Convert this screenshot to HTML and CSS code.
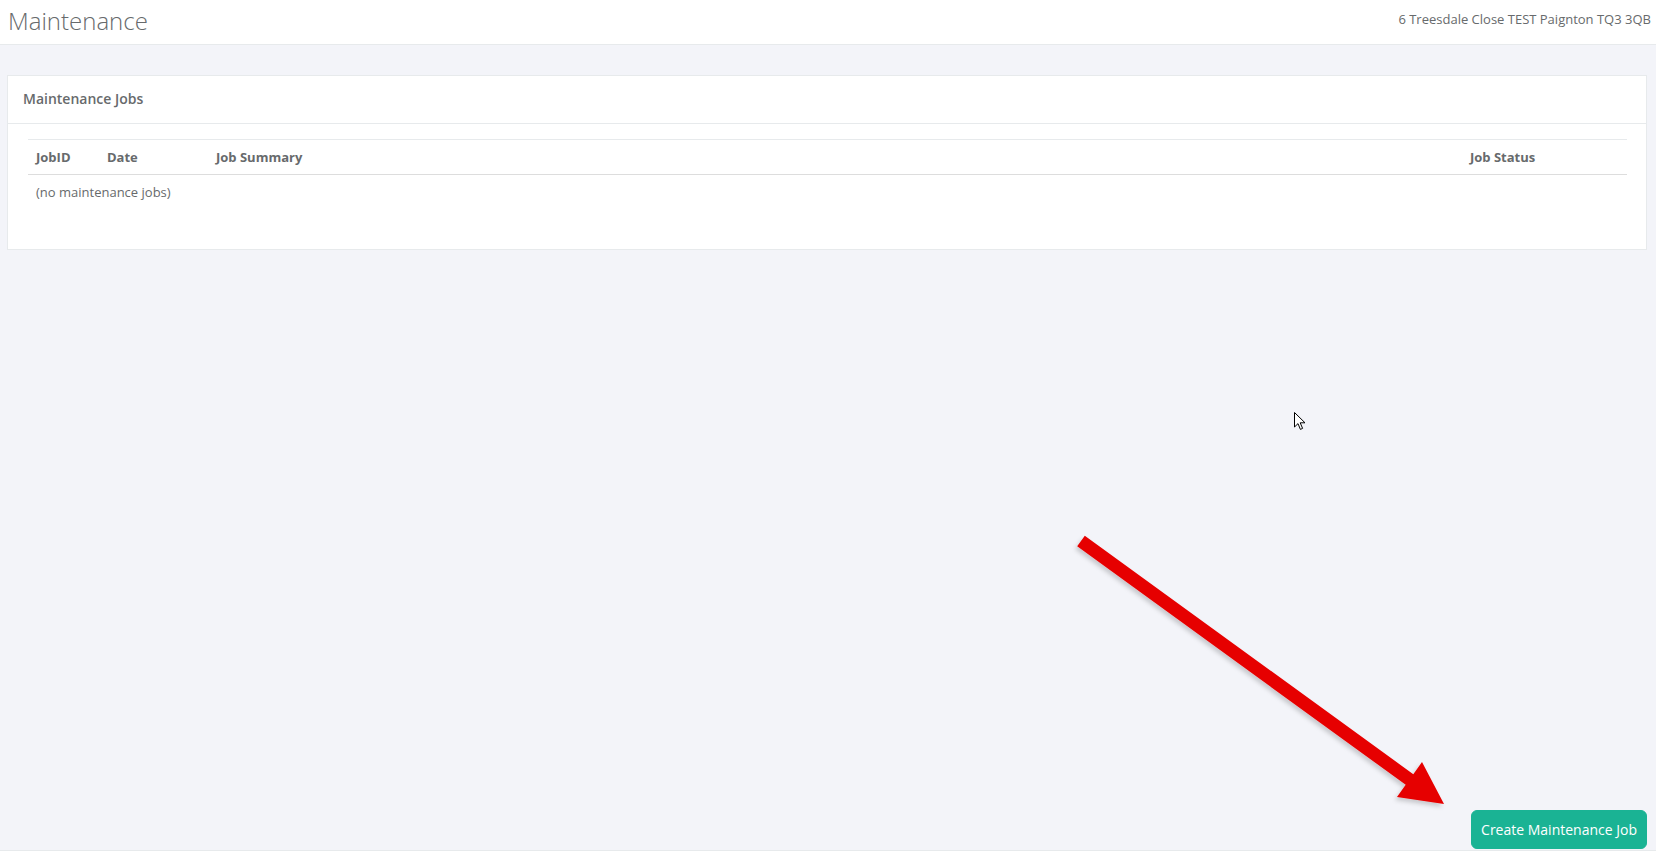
FILE: index.html
```html
<!DOCTYPE html>
<html lang="en">
<head>
<meta charset="utf-8">
<title>Maintenance</title>
<link rel="stylesheet" href="styles.css">
</head>
<body>
<div class="page">
  <header class="topbar">
    <h2 class="title">Maintenance</h2>
    <div class="address">6 Treesdale Close TEST Paignton TQ3 3QB</div>
  </header>

  <main class="content">
    <section class="ibox">
      <div class="ibox-title">Maintenance Jobs</div>
      <div class="ibox-content">
        <table class="jobs">
          <colgroup>
            <col class="c-id">
            <col class="c-date">
            <col>
            <col class="c-status">
          </colgroup>
          <thead>
            <tr><th>JobID</th><th>Date</th><th>Job Summary</th><th>Job Status</th></tr>
          </thead>
          <tbody>
            <tr><td colspan="4">(no maintenance jobs)</td></tr>
          </tbody>
        </table>
      </div>
    </section>
  </main>

  <div class="actions">
    <button class="btn-create" type="button">Create Maintenance Job</button>
  </div>
  <footer class="footer"></footer>
</div>

<svg class="annotation" width="1656" height="864" viewBox="0 0 1656 864" aria-hidden="true">
  <defs>
    <filter id="shadow" x="-10%" y="-10%" width="120%" height="120%">
      <feDropShadow dx="-2" dy="3" stdDeviation="2" flood-color="#000" flood-opacity="0.18"/>
    </filter>
  </defs>
  <polygon filter="url(#shadow)" fill="#e60606"
    points="1084.8,535.7 1413.3,774.2 1422,762 1444,804 1397,797 1405.7,784.8 1077.2,546.3"/>
</svg>

<svg class="cursor" width="12" height="19" viewBox="0 0 12 19" aria-hidden="true">
  <path d="M0.5 0.5 L0.5 15 L4 11.6 L6.4 17.4 L8.6 16.4 L6.2 10.8 L11 10.8 Z" fill="#fff" stroke="#000" stroke-width="1" stroke-linejoin="miter"/>
</svg>
</body>
</html>
```

FILE: styles.css
```css
* { box-sizing: border-box; }

html, body {
  margin: 0;
  padding: 0;
  height: 100%;
}

body {
  background: #f3f4f9;
  color: #676a6c;
  font-family: "Open Sans", "Liberation Sans", Arial, sans-serif;
  font-size: 13px;
  position: relative;
  overflow: hidden;
}

.page {
  display: flex;
  flex-direction: column;
  height: 864px;
}

.topbar {
  display: flex;
  justify-content: space-between;
  align-items: flex-start;
  height: 45px;
  background: #ffffff;
  border-bottom: 1px solid #e7eaec;
  padding: 0 5px 0 8px;
}

.title {
  margin: 0;
  font-size: 24px;
  font-weight: 300;
  line-height: 41px;
  color: #676a6c;
}

.address {
  padding-top: 10px;
  line-height: 18px;
  font-size: 13px;
  color: #676a6c;
}

.content {
  flex: 1;
  padding: 30px 9px 0 7px;
}

.ibox {
  background: #ffffff;
  border: 1px solid #e7eaec;
}

.ibox-title {
  height: 48px;
  padding: 13px 15px 0 15px;
  font-size: 14px;
  font-weight: 600;
  line-height: 20px;
  border-bottom: 1px solid #e7eaec;
}

.ibox-content {
  padding: 15px 19px 40px 20px;
}

.jobs {
  width: 100%;
  border-collapse: collapse;
  table-layout: fixed;
}

.c-id { width: 71px; }
.c-date { width: 109px; }
.c-status { width: 165px; }

.jobs th,
.jobs td {
  padding: 8px;
  line-height: 18px;
  text-align: left;
  vertical-align: top;
  font-size: 13px;
}

.jobs th {
  font-weight: 700;
  border-top: 1px solid #e7eaec;
  border-bottom: 1px solid #dddddd;
}

.jobs td {
  font-weight: 400;
}

.actions {
  display: flex;
  justify-content: flex-end;
  padding: 0 9px 1px 0;
}

.btn-create {
  height: 39px;
  padding: 0 9px 0 9px;
  background: #1ab394;
  border: 1px solid #1ab394;
  border-radius: 6px;
  color: #ffffff;
  font-family: "Open Sans", "Liberation Sans", Arial, sans-serif;
  font-size: 14px;
  font-weight: 400;
  cursor: pointer;
}

.footer {
  height: 14px;
  background: #ffffff;
  border-top: 1px solid #e7eaec;
}

.annotation {
  position: absolute;
  left: 0;
  top: 0;
  pointer-events: none;
}

.cursor {
  position: absolute;
  left: 1294px;
  top: 412px;
  pointer-events: none;
}
```
